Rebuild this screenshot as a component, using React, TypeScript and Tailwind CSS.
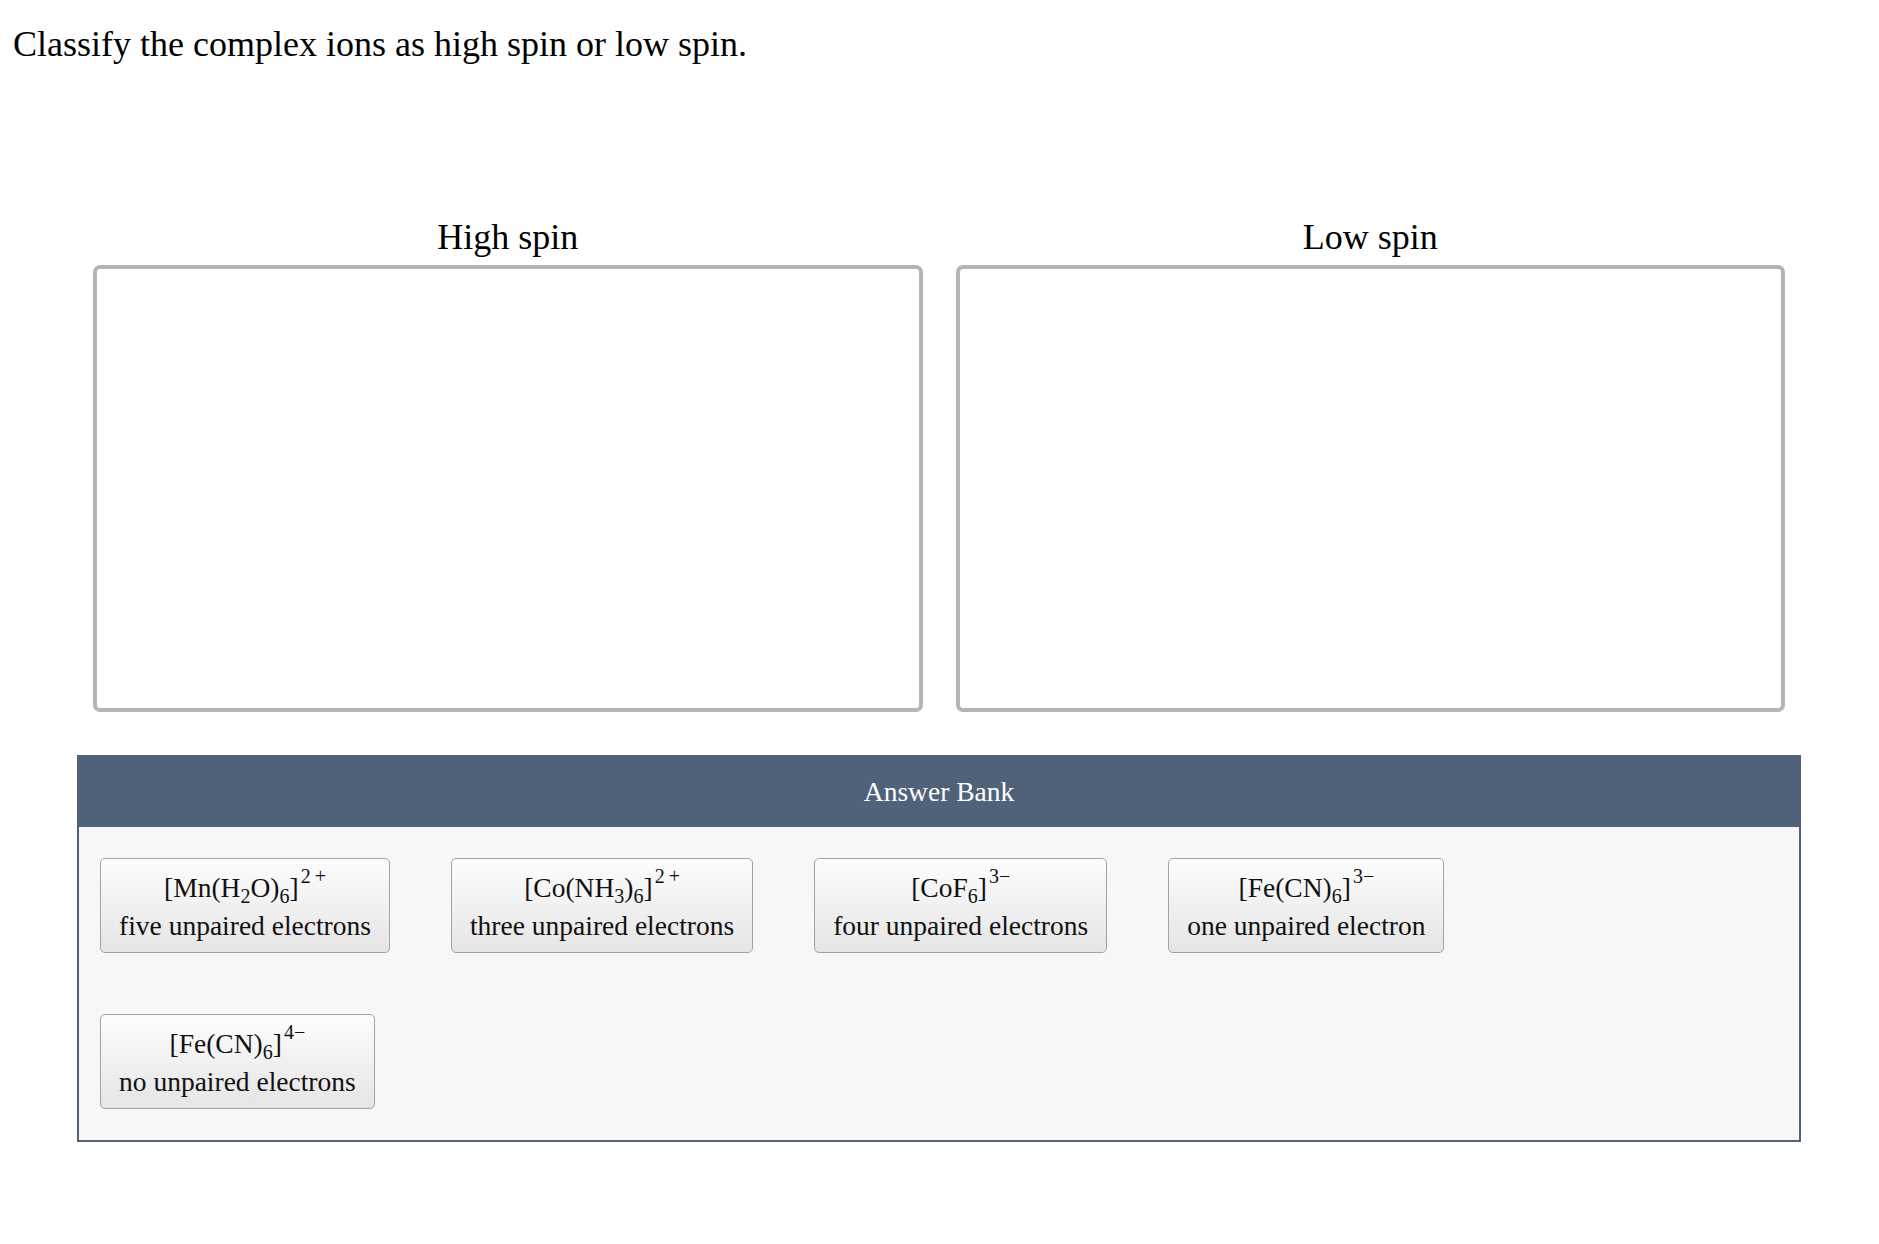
import React from "react";

type Item = { formula: React.ReactNode; label: string };

const Sub = ({ children }: { children: React.ReactNode }) => (
  <sub className="relative top-[6.5px] bottom-auto text-[20px] leading-none align-baseline">{children}</sub>
);

const Sup = ({ children }: { children: React.ReactNode }) => (
  <sup className="relative -top-[13.7px] ml-[2px] text-[20px] leading-none align-baseline">{children}</sup>
);

const row1: Item[] = [
  {
    formula: (
      <>
        [Mn(H<Sub>2</Sub>O)<Sub>6</Sub>]<Sup>2&thinsp;+</Sup>
      </>
    ),
    label: "five unpaired electrons",
  },
  {
    formula: (
      <>
        [Co(NH<Sub>3</Sub>)<Sub>6</Sub>]<Sup>2&thinsp;+</Sup>
      </>
    ),
    label: "three unpaired electrons",
  },
  {
    formula: (
      <>
        [CoF<Sub>6</Sub>]<Sup>3−</Sup>
      </>
    ),
    label: "four unpaired electrons",
  },
  {
    formula: (
      <>
        [Fe(CN)<Sub>6</Sub>]<Sup>3−</Sup>
      </>
    ),
    label: "one unpaired electron",
  },
];

const row2: Item[] = [
  {
    formula: (
      <>
        [Fe(CN)<Sub>6</Sub>]<Sup>4−</Sup>
      </>
    ),
    label: "no unpaired electrons",
  },
];

function Chip({ item }: { item: Item }) {
  return (
    <div className="border border-[#a3a3a3] rounded-[5px] bg-gradient-to-b from-[#fdfdfd] to-[#e5e5e5] px-[18px] pt-[9.7px] pb-[7.3px] text-center text-[27.5px] text-[#111]">
      <div className="leading-[38px] whitespace-nowrap">{item.formula}</div>
      <div className="leading-[38px] whitespace-nowrap">{item.label}</div>
    </div>
  );
}

function DropZone({ title }: { title: string }) {
  return (
    <div className="flex-1 flex flex-col">
      <div className="text-center text-[36px] leading-[36px]">{title}</div>
      <div className="mt-[10px] h-[447px] border-4 border-[#b5b5b5] rounded-[7px] bg-white" />
    </div>
  );
}

export default function App() {
  return (
    <div className="min-h-screen bg-white text-black font-['Liberation_Serif','Times_New_Roman',serif]">
      <div className="pl-[13px] pt-[26px] text-[36px] leading-[36px]">
        Classify the complex ions as high spin or low spin.
      </div>

      <div className="ml-[77px] w-[1724px] mt-[157px]">
        <div className="flex gap-[33px] px-[16px]">
          <DropZone title="High spin" />
          <DropZone title="Low spin" />
        </div>

        <div className="mt-[43px] border-2 border-[#506279]">
          <div className="h-[70px] bg-[#506279] flex items-center justify-center text-white text-[27.5px]">
            Answer Bank
          </div>
          <div className="bg-[#f7f7f7] pl-[21px] pt-[31px] pb-[31px] flex flex-col gap-[61px]">
            <div className="flex gap-[61px]">
              {row1.map((it, i) => (
                <Chip key={i} item={it} />
              ))}
            </div>
            <div className="flex gap-[61px]">
              {row2.map((it, i) => (
                <Chip key={i} item={it} />
              ))}
            </div>
          </div>
        </div>
      </div>
    </div>
  );
}
